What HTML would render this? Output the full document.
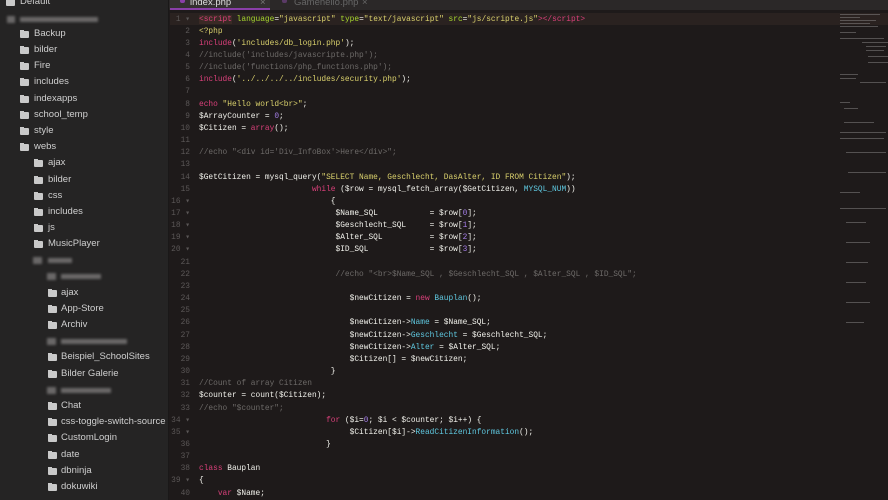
<!DOCTYPE html>
<html><head><meta charset="utf-8"><style>
*{margin:0;padding:0;box-sizing:border-box}
body{width:888px;height:500px;overflow:hidden;background:#1e1a1a;position:relative;font-family:"Liberation Sans",sans-serif}
#side{position:absolute;left:0;top:0;width:169px;height:500px;background:#252424;border-right:1px solid #1a1818}
.it{position:absolute;height:16px;line-height:16px;font-size:9.5px;color:#cfcfcf;white-space:nowrap}
.fi{position:absolute;width:9px;height:7px;background:#c9c9c9;border-radius:1px}
.fi:before{content:"";position:absolute;left:0;top:-1.5px;width:4px;height:2px;background:#c9c9c9}
.blur{position:absolute;height:5px;background:#6a6868;filter:blur(1.2px)}
#tabs{position:absolute;left:169px;top:0;width:719px;height:10px;background:#2b2828}
#tab1{position:absolute;left:170px;top:0;width:100px;height:10px;background:#343030;border-bottom:2px solid #8a3fa8}
#code{position:absolute;left:170px;top:13.5px;right:0;font-family:"Liberation Mono",monospace;font-size:7.85px;line-height:12.15px;color:#f2f2ec;white-space:pre}
.ln{display:inline-block;width:20px;text-align:right;color:#5b5757;margin-right:9px}
.k{color:#d9407a}.s{color:#d9d06c}.c{color:#6d6a68}.n{color:#a47ee6}.f{color:#5fc8e0}.g{color:#a6d62e}
#mini{position:absolute;left:840px;top:12px;width:48px;height:330px;opacity:.5}
</style></head><body>
<div id="side">
<div class="fi" style="left:6px;top:-1px"></div><div class="it" style="left:20px;top:-6px">Default</div>
<div class="blur" style="left:7px;top:16px;width:8px;height:7px"></div><div class="blur" style="left:20px;top:17px;width:78px"></div>
<div class="fi" style="left:20px;top:31px"></div><div class="it" style="left:34px;top:26px">Backup</div>
<div class="fi" style="left:20px;top:47px"></div><div class="it" style="left:34px;top:42px">bilder</div>
<div class="fi" style="left:20px;top:63px"></div><div class="it" style="left:34px;top:58px">Fire</div>
<div class="fi" style="left:20px;top:79px"></div><div class="it" style="left:34px;top:74px">includes</div>
<div class="fi" style="left:20px;top:96px"></div><div class="it" style="left:34px;top:91px">indexapps</div>
<div class="fi" style="left:20px;top:112px"></div><div class="it" style="left:34px;top:107px">school_temp</div>
<div class="fi" style="left:20px;top:128px"></div><div class="it" style="left:34px;top:123px">style</div>
<div class="fi" style="left:20px;top:144px"></div><div class="it" style="left:34px;top:139px">webs</div>
<div class="fi" style="left:34px;top:160px"></div><div class="it" style="left:48px;top:155px">ajax</div>
<div class="fi" style="left:34px;top:177px"></div><div class="it" style="left:48px;top:172px">bilder</div>
<div class="fi" style="left:34px;top:193px"></div><div class="it" style="left:48px;top:188px">css</div>
<div class="fi" style="left:34px;top:209px"></div><div class="it" style="left:48px;top:204px">includes</div>
<div class="fi" style="left:34px;top:225px"></div><div class="it" style="left:48px;top:220px">js</div>
<div class="fi" style="left:34px;top:241px"></div><div class="it" style="left:48px;top:236px">MusicPlayer</div>
<div class="blur" style="left:33px;top:257px;width:9px;height:7px"></div><div class="blur" style="left:48px;top:258px;width:24px"></div>
<div class="blur" style="left:47px;top:273px;width:9px;height:7px"></div><div class="blur" style="left:61px;top:274px;width:40px"></div>
<div class="fi" style="left:48px;top:290px"></div><div class="it" style="left:61px;top:285px">ajax</div>
<div class="fi" style="left:48px;top:306px"></div><div class="it" style="left:61px;top:301px">App-Store</div>
<div class="fi" style="left:48px;top:322px"></div><div class="it" style="left:61px;top:317px">Archiv</div>
<div class="blur" style="left:47px;top:338px;width:9px;height:7px"></div><div class="blur" style="left:61px;top:339px;width:66px"></div>
<div class="fi" style="left:48px;top:354px"></div><div class="it" style="left:61px;top:349px">Beispiel_SchoolSites</div>
<div class="fi" style="left:48px;top:371px"></div><div class="it" style="left:61px;top:366px">Bilder Galerie</div>
<div class="blur" style="left:47px;top:387px;width:9px;height:7px"></div><div class="blur" style="left:61px;top:388px;width:50px"></div>
<div class="fi" style="left:48px;top:403px"></div><div class="it" style="left:61px;top:398px">Chat</div>
<div class="fi" style="left:48px;top:419px"></div><div class="it" style="left:61px;top:414px">css-toggle-switch-source</div>
<div class="fi" style="left:48px;top:435px"></div><div class="it" style="left:61px;top:430px">CustomLogin</div>
<div class="fi" style="left:48px;top:452px"></div><div class="it" style="left:61px;top:447px">date</div>
<div class="fi" style="left:48px;top:468px"></div><div class="it" style="left:61px;top:463px">dbninja</div>
<div class="fi" style="left:48px;top:484px"></div><div class="it" style="left:61px;top:479px">dokuwiki</div>
</div>
<div id="tabs"></div>
<div id="tab1"></div>
<div style="position:absolute;left:180px;top:-2px;width:5px;height:5px;background:#8a3fa8;border-radius:2px"></div>
<div class="it" style="left:190px;top:-5px;color:#ddd">index.php</div>
<div class="it" style="left:260px;top:-5px;color:#777">×</div>
<div style="position:absolute;left:282px;top:-2px;width:5px;height:5px;background:#5a3a66;border-radius:2px"></div>
<div class="it" style="left:294px;top:-5px;color:#666">Gamehello.php</div>
<div class="it" style="left:362px;top:-5px;color:#666">×</div>
<div style="position:absolute;left:170px;top:13px;width:718px;height:12px;background:#2a2220"></div>
<div id="code"><span class="ln">1 ▾</span><span class="k" style="background:#3a2a25">&lt;script</span> <span class="g">language</span>=<span class="s">"javascript"</span> <span class="g">type</span>=<span class="s">"text/javascript"</span> <span class="g">src</span>=<span class="s">"js/scripte.js"</span><span class="k">&gt;&lt;/script&gt;</span>
<span class="ln">2</span><span class="s">&lt;?php</span>
<span class="ln">3</span><span class="k">include</span>(<span class="s">'includes/db_login.php'</span>);
<span class="ln">4</span><span class="c">//include('includes/javascripte.php');</span>
<span class="ln">5</span><span class="c">//include('functions/php_functions.php');</span>
<span class="ln">6</span><span class="k">include</span>(<span class="s">'../../../../includes/security.php'</span>);
<span class="ln">7</span>
<span class="ln">8</span><span class="k">echo</span> <span class="s">"Hello world&lt;br&gt;"</span>;
<span class="ln">9</span>$ArrayCounter = <span class="n">0</span>;
<span class="ln">10</span>$Citizen = <span class="k">array</span>();
<span class="ln">11</span>
<span class="ln">12</span><span class="c">//echo "&lt;div id='Div_InfoBox'&gt;Here&lt;/div&gt;";</span>
<span class="ln">13</span>
<span class="ln">14</span>$GetCitizen = mysql_query(<span class="s">"SELECT Name, Geschlecht, DasAlter, ID FROM Citizen"</span>);
<span class="ln">15</span>                        <span class="k">while</span> ($row = mysql_fetch_array($GetCitizen, <span class="f">MYSQL_NUM</span>))
<span class="ln">16 ▾</span>                            {
<span class="ln">17 ▾</span>                             $Name_SQL           = $row[<span class="n">0</span>];
<span class="ln">18 ▾</span>                             $Geschlecht_SQL     = $row[<span class="n">1</span>];
<span class="ln">19 ▾</span>                             $Alter_SQL          = $row[<span class="n">2</span>];
<span class="ln">20 ▾</span>                             $ID_SQL             = $row[<span class="n">3</span>];
<span class="ln">21</span>
<span class="ln">22</span>                             <span class="c">//echo "&lt;br&gt;$Name_SQL , $Geschlecht_SQL , $Alter_SQL , $ID_SQL";</span>
<span class="ln">23</span>
<span class="ln">24</span>                                $newCitizen = <span class="k">new</span> <span class="f">Bauplan</span>();
<span class="ln">25</span>
<span class="ln">26</span>                                $newCitizen-&gt;<span class="f">Name</span> = $Name_SQL;
<span class="ln">27</span>                                $newCitizen-&gt;<span class="f">Geschlecht</span> = $Geschlecht_SQL;
<span class="ln">28</span>                                $newCitizen-&gt;<span class="f">Alter</span> = $Alter_SQL;
<span class="ln">29</span>                                $Citizen[] = $newCitizen;
<span class="ln">30</span>                            }
<span class="ln">31</span><span class="c">//Count of array Citizen</span>
<span class="ln">32</span>$counter = count($Citizen);
<span class="ln">33</span><span class="c">//echo "$counter";</span>
<span class="ln">34 ▾</span>                           <span class="k">for</span> ($i=<span class="n">0</span>; $i &lt; $counter; $i++) {
<span class="ln">35 ▾</span>                                $Citizen[$i]-&gt;<span class="f">ReadCitizenInformation</span>();
<span class="ln">36</span>                           }
<span class="ln">37</span>
<span class="ln">38</span><span class="k">class</span> Bauplan
<span class="ln">39 ▾</span>{
<span class="ln">40</span>    <span class="k">var</span> $Name;</div>
<svg id="mini" viewBox="0 0 48 330"><g fill="#8a8888">
<rect x="0" y="2" width="40" height="1"/><rect x="0" y="5" width="20" height="1"/><rect x="0" y="8" width="36" height="1"/><rect x="0" y="11" width="30" height="1"/><rect x="0" y="14" width="38" height="1"/><rect x="0" y="20" width="16" height="1"/><rect x="0" y="26" width="44" height="1"/><rect x="22" y="30" width="26" height="1"/><rect x="26" y="34" width="20" height="1"/><rect x="26" y="38" width="18" height="1"/><rect x="28" y="44" width="20" height="1"/><rect x="28" y="50" width="20" height="1"/><rect x="0" y="62" width="18" height="1"/><rect x="0" y="66" width="16" height="1"/><rect x="20" y="70" width="26" height="1"/><rect x="0" y="90" width="10" height="1"/><rect x="4" y="96" width="14" height="1"/><rect x="4" y="110" width="30" height="1"/><rect x="0" y="120" width="46" height="1"/><rect x="0" y="126" width="44" height="1"/><rect x="6" y="140" width="40" height="1"/><rect x="8" y="160" width="38" height="1"/><rect x="0" y="180" width="20" height="1"/><rect x="0" y="196" width="46" height="1"/><rect x="6" y="210" width="20" height="1"/><rect x="6" y="230" width="24" height="1"/><rect x="6" y="250" width="22" height="1"/><rect x="6" y="270" width="20" height="1"/><rect x="6" y="290" width="24" height="1"/><rect x="6" y="310" width="18" height="1"/></g></svg>
</body></html>
